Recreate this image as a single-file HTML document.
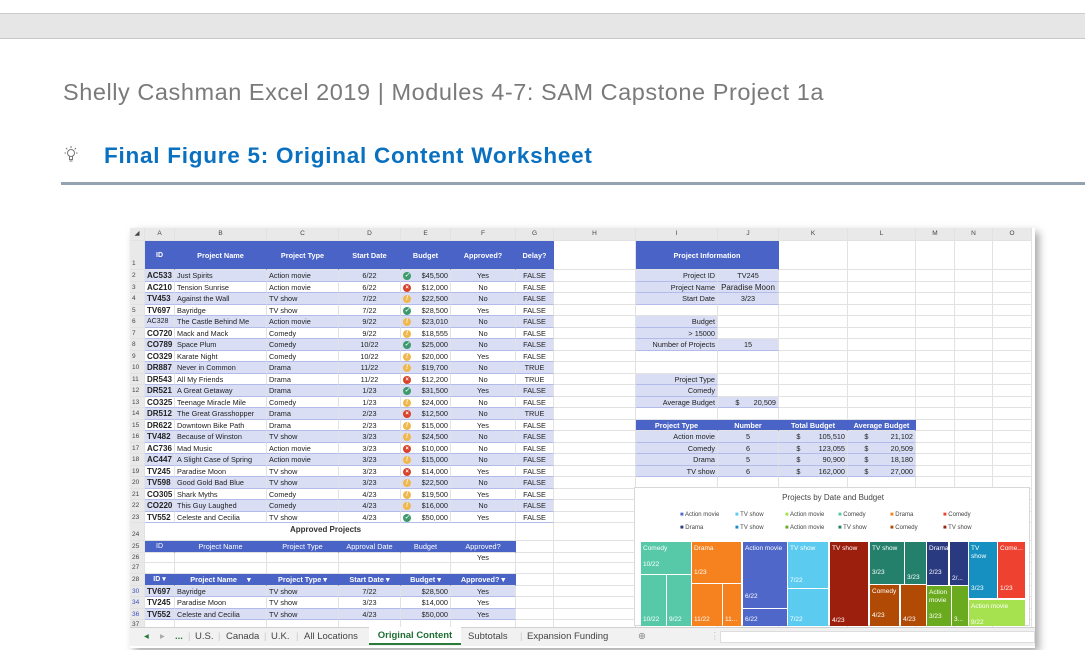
<!DOCTYPE html>
<html><head><meta charset="utf-8"><style>
*{margin:0;padding:0;box-sizing:border-box}
body{width:1085px;height:650px;background:#fff;position:relative;overflow:hidden;font-family:"Liberation Sans",sans-serif}
.top{position:absolute;left:0;top:13px;width:1085px;height:26px;background:#e6e6e6;border-top:1px solid #ccc;border-bottom:1px solid #c8c8c8}
.t1{position:absolute;left:63px;top:79px;font-size:23.5px;color:#7a7a7a;letter-spacing:0.55px}
.t2{position:absolute;left:104px;top:143px;font-size:22.5px;color:#0a70c0;font-weight:bold;letter-spacing:0.75px}
.rule{position:absolute;left:61px;top:182px;width:1024px;height:3px;background:#93a3b2}
.sheet{position:absolute;left:130px;top:228px;width:905px;height:420px;background:#fff;box-shadow:4px 4px 8px rgba(0,0,0,.35);font-size:7.3px;color:#222;overflow:hidden}
.r{display:flex;height:11.5px;line-height:11.5px}
.r>span{display:block;overflow:hidden;white-space:nowrap;border-right:1px solid #e2e2e2;border-bottom:1px solid #e2e2e2;padding:0 2px}
.n{width:15px;background:#e9e9e9;color:#444;text-align:left;font-size:6.5px}
.a{width:30px}.bb{width:92px}.c{width:72px}.d{width:62px;text-align:center}.e{width:50px;text-align:right}.f{width:65px;text-align:center}.g{width:38px;text-align:center}
.h{width:82px}.i{width:82px;text-align:right}.j{width:61px;text-align:center}.k{width:69px;text-align:right}.l{width:68px;text-align:right}.m{width:39px}.nn{width:38px}.o{width:39px}
.hd>span{background:#e9e9e9;text-align:center;color:#444;font-size:6.5px}
.b{background:#d9def4!important;border-bottom:1px solid #b3bce8!important}
.w{border-bottom:1px solid #b3bce8!important}
.bl{background:#4a63c7!important;color:#fff;font-weight:bold;border-right-color:#4a63c7!important}
.a{font-weight:bold;font-size:8px}
.ic{display:inline-block;width:8px;height:8px;border-radius:50%;vertical-align:-1px;float:left;margin-top:2px;color:#fff;font-size:6px;line-height:8px;text-align:center;font-weight:bold}
.G{background:#3c9a6c}.R{background:#d8432a}.Y{background:#f0b84c}
.tabs{position:absolute;left:0;top:399px;width:905px;height:19px;background:#f1f1f1;border-top:1px solid #d0d0d0;font-size:9.5px;color:#444;line-height:18px}
.tabs span{position:absolute;top:0}
.chart{position:absolute;left:504px;top:259px;width:396px;height:139px;background:#fff;border:1px solid #d8d8d8}
.chart div{position:absolute;color:#fff;font-size:6.5px;padding:3px 2px;overflow:hidden;line-height:8px}
.chart .lg{position:absolute;color:#444;font-size:6px;padding:0}
</style></head><body>
<div class="top"></div>
<div class="t1">Shelly Cashman Excel 2019 | Modules 4-7: SAM Capstone Project 1a</div>
<svg style="position:absolute;left:64px;top:145px" width="14" height="18" viewBox="0 0 14 18"><g stroke="#777" fill="none" stroke-width="1"><circle cx="7" cy="8" r="3.5"/><path d="M5.5 11.5v3h3v-3M5.5 16h3M7 1v2M2 3l1.3 1.3M12 3l-1.3 1.3M0.5 8h1.5M12 8h1.5"/></g></svg>
<div class="t2">Final Figure 5: Original Content Worksheet</div>
<div class="rule"></div>
<div class="sheet">
<div class="r hd" style="height:12.5px;line-height:12px"><span class="n">◢</span><span class="a" style="font-weight:normal;font-size:6.5px">A</span><span class="bb">B</span><span class="c">C</span><span class="d">D</span><span class="e" style="text-align:center">E</span><span class="f">F</span><span class="g">G</span><span class="h">H</span><span class="i" style="text-align:center">I</span><span class="j">J</span><span class="k" style="text-align:center">K</span><span class="l" style="text-align:center">L</span><span class="m">M</span><span class="nn">N</span><span class="o">O</span></div>
<div class="r" style="height:29.5px;line-height:29px"><span class="n" style="line-height:45px">1</span><span class="a bl" style="text-align:center;font-size:7px">ID</span><span class="bb bl" style="text-align:center">Project Name</span><span class="c bl" style="text-align:center">Project Type</span><span class="d bl">Start Date</span><span class="e bl" style="text-align:center">Budget</span><span class="f bl">Approved?</span><span class="g bl">Delay?</span><span class="h"></span><span class="i bl" style="text-align:center;width:143px">Project Information</span><span class="k"></span><span class="l"></span><span class="m"></span><span class="nn"></span><span class="o"></span></div>
<div class="r"><span class="n">2</span><span class="a b">AC533</span><span class="bb b">Just Spirits</span><span class="c b">Action movie</span><span class="d b">6/22</span><span class="e b"><i class="ic G">✓</i>$45,500</span><span class="f b">Yes</span><span class="g b">FALSE</span><span class="h"></span><span class="i b">Project ID</span><span class="j b">TV245</span><span class="k"></span><span class="l"></span><span class="m"></span><span class="nn"></span><span class="o"></span></div>
<div class="r"><span class="n">3</span><span class="a w">AC210</span><span class="bb w">Tension Sunrise</span><span class="c w">Action movie</span><span class="d w">6/22</span><span class="e w"><i class="ic R">×</i>$12,000</span><span class="f w">No</span><span class="g w">FALSE</span><span class="h"></span><span class="i b">Project Name</span><span class="j b" style="font-size:8px;overflow:visible">Paradise Moon</span><span class="k"></span><span class="l"></span><span class="m"></span><span class="nn"></span><span class="o"></span></div>
<div class="r"><span class="n">4</span><span class="a b">TV453</span><span class="bb b">Against the Wall</span><span class="c b">TV show</span><span class="d b">7/22</span><span class="e b"><i class="ic Y">!</i>$22,500</span><span class="f b">No</span><span class="g b">FALSE</span><span class="h"></span><span class="i b">Start Date</span><span class="j b">3/23</span><span class="k"></span><span class="l"></span><span class="m"></span><span class="nn"></span><span class="o"></span></div>
<div class="r"><span class="n">5</span><span class="a w">TV697</span><span class="bb w">Bayridge</span><span class="c w">TV show</span><span class="d w">7/22</span><span class="e w"><i class="ic G">✓</i>$28,500</span><span class="f w">Yes</span><span class="g w">FALSE</span><span class="h"></span><span class="i"></span><span class="j"></span><span class="k"></span><span class="l"></span><span class="m"></span><span class="nn"></span><span class="o"></span></div>
<div class="r"><span class="n">6</span><span class="a b" style="font-weight:normal;font-size:7px">AC328</span><span class="bb b">The Castle Behind Me</span><span class="c b">Action movie</span><span class="d b">9/22</span><span class="e b"><i class="ic Y">!</i>$23,010</span><span class="f b">No</span><span class="g b">FALSE</span><span class="h"></span><span class="i b">Budget</span><span class="j"></span><span class="k"></span><span class="l"></span><span class="m"></span><span class="nn"></span><span class="o"></span></div>
<div class="r"><span class="n">7</span><span class="a w">CO720</span><span class="bb w">Mack and Mack</span><span class="c w">Comedy</span><span class="d w">9/22</span><span class="e w"><i class="ic Y">!</i>$18,555</span><span class="f w">No</span><span class="g w">FALSE</span><span class="h"></span><span class="i b">&gt; 15000</span><span class="j"></span><span class="k"></span><span class="l"></span><span class="m"></span><span class="nn"></span><span class="o"></span></div>
<div class="r"><span class="n">8</span><span class="a b">CO789</span><span class="bb b">Space Plum</span><span class="c b">Comedy</span><span class="d b">10/22</span><span class="e b"><i class="ic G">✓</i>$25,000</span><span class="f b">No</span><span class="g b">FALSE</span><span class="h"></span><span class="i b">Number of Projects</span><span class="j b">15</span><span class="k"></span><span class="l"></span><span class="m"></span><span class="nn"></span><span class="o"></span></div>
<div class="r"><span class="n">9</span><span class="a w">CO329</span><span class="bb w">Karate Night</span><span class="c w">Comedy</span><span class="d w">10/22</span><span class="e w"><i class="ic Y">!</i>$20,000</span><span class="f w">Yes</span><span class="g w">FALSE</span><span class="h"></span><span class="i"></span><span class="j"></span><span class="k"></span><span class="l"></span><span class="m"></span><span class="nn"></span><span class="o"></span></div>
<div class="r"><span class="n">10</span><span class="a b">DR887</span><span class="bb b">Never in Common</span><span class="c b">Drama</span><span class="d b">11/22</span><span class="e b"><i class="ic Y">!</i>$19,700</span><span class="f b">No</span><span class="g b">TRUE</span><span class="h"></span><span class="i"></span><span class="j"></span><span class="k"></span><span class="l"></span><span class="m"></span><span class="nn"></span><span class="o"></span></div>
<div class="r"><span class="n">11</span><span class="a w">DR543</span><span class="bb w">All My Friends</span><span class="c w">Drama</span><span class="d w">11/22</span><span class="e w"><i class="ic R">×</i>$12,200</span><span class="f w">No</span><span class="g w">TRUE</span><span class="h"></span><span class="i b">Project Type</span><span class="j"></span><span class="k"></span><span class="l"></span><span class="m"></span><span class="nn"></span><span class="o"></span></div>
<div class="r"><span class="n">12</span><span class="a b">DR521</span><span class="bb b">A Great Getaway</span><span class="c b">Drama</span><span class="d b">1/23</span><span class="e b"><i class="ic G">✓</i>$31,500</span><span class="f b">Yes</span><span class="g b">FALSE</span><span class="h"></span><span class="i b">Comedy</span><span class="j"></span><span class="k"></span><span class="l"></span><span class="m"></span><span class="nn"></span><span class="o"></span></div>
<div class="r"><span class="n">13</span><span class="a w">CO325</span><span class="bb w">Teenage Miracle Mile</span><span class="c w">Comedy</span><span class="d w">1/23</span><span class="e w"><i class="ic Y">!</i>$24,000</span><span class="f w">No</span><span class="g w">FALSE</span><span class="h"></span><span class="i b">Average Budget</span><span class="j b" style="text-align:right">$ &nbsp; &nbsp; &nbsp; 20,509</span><span class="k"></span><span class="l"></span><span class="m"></span><span class="nn"></span><span class="o"></span></div>
<div class="r"><span class="n">14</span><span class="a b">DR512</span><span class="bb b">The Great Grasshopper</span><span class="c b">Drama</span><span class="d b">2/23</span><span class="e b"><i class="ic R">×</i>$12,500</span><span class="f b">No</span><span class="g b">TRUE</span><span class="h"></span><span class="i"></span><span class="j"></span><span class="k"></span><span class="l"></span><span class="m"></span><span class="nn"></span><span class="o"></span></div>
<div class="r"><span class="n">15</span><span class="a w">DR622</span><span class="bb w">Downtown Bike Path</span><span class="c w">Drama</span><span class="d w">2/23</span><span class="e w"><i class="ic Y">!</i>$15,000</span><span class="f w">Yes</span><span class="g w">FALSE</span><span class="h"></span><span class="i bl" style="text-align:center">Project Type</span><span class="j bl">Number</span><span class="k bl" style="text-align:center">Total Budget</span><span class="l bl" style="text-align:center">Average Budget</span><span class="m"></span><span class="nn"></span><span class="o"></span></div>
<div class="r"><span class="n">16</span><span class="a b">TV482</span><span class="bb b">Because of Winston</span><span class="c b">TV show</span><span class="d b">3/23</span><span class="e b"><i class="ic Y">!</i>$24,500</span><span class="f b">No</span><span class="g b">FALSE</span><span class="h"></span><span class="i b">Action movie</span><span class="j b">5</span><span class="k b">$ &nbsp; &nbsp; &nbsp; &nbsp; 105,510</span><span class="l b">$ &nbsp; &nbsp; &nbsp; &nbsp; &nbsp; 21,102</span><span class="m"></span><span class="nn"></span><span class="o"></span></div>
<div class="r"><span class="n">17</span><span class="a w">AC736</span><span class="bb w">Mad Music</span><span class="c w">Action movie</span><span class="d w">3/23</span><span class="e w"><i class="ic R">×</i>$10,000</span><span class="f w">No</span><span class="g w">FALSE</span><span class="h"></span><span class="i b">Comedy</span><span class="j b">6</span><span class="k b">$ &nbsp; &nbsp; &nbsp; &nbsp; 123,055</span><span class="l b">$ &nbsp; &nbsp; &nbsp; &nbsp; &nbsp; 20,509</span><span class="m"></span><span class="nn"></span><span class="o"></span></div>
<div class="r"><span class="n">18</span><span class="a b">AC447</span><span class="bb b">A Slight Case of Spring</span><span class="c b">Action movie</span><span class="d b">3/23</span><span class="e b"><i class="ic Y">!</i>$15,000</span><span class="f b">No</span><span class="g b">FALSE</span><span class="h"></span><span class="i b">Drama</span><span class="j b">5</span><span class="k b">$ &nbsp; &nbsp; &nbsp; &nbsp; &nbsp; 90,900</span><span class="l b">$ &nbsp; &nbsp; &nbsp; &nbsp; &nbsp; 18,180</span><span class="m"></span><span class="nn"></span><span class="o"></span></div>
<div class="r"><span class="n">19</span><span class="a w">TV245</span><span class="bb w">Paradise Moon</span><span class="c w">TV show</span><span class="d w">3/23</span><span class="e w"><i class="ic R">×</i>$14,000</span><span class="f w">Yes</span><span class="g w">FALSE</span><span class="h"></span><span class="i b">TV show</span><span class="j b">6</span><span class="k b">$ &nbsp; &nbsp; &nbsp; &nbsp; 162,000</span><span class="l b">$ &nbsp; &nbsp; &nbsp; &nbsp; &nbsp; 27,000</span><span class="m"></span><span class="nn"></span><span class="o"></span></div>
<div class="r"><span class="n">20</span><span class="a b">TV598</span><span class="bb b">Good Gold Bad Blue</span><span class="c b">TV show</span><span class="d b">3/23</span><span class="e b"><i class="ic Y">!</i>$22,500</span><span class="f b">No</span><span class="g b">FALSE</span><span class="h"></span><span class="i"></span><span class="j"></span><span class="k"></span><span class="l"></span><span class="m"></span><span class="nn"></span><span class="o"></span></div>
<div class="r"><span class="n">21</span><span class="a w">CO305</span><span class="bb w">Shark Myths</span><span class="c w">Comedy</span><span class="d w">4/23</span><span class="e w"><i class="ic Y">!</i>$19,500</span><span class="f w">Yes</span><span class="g w">FALSE</span><span class="h"></span><span class="i"></span><span class="j"></span><span class="k"></span><span class="l"></span><span class="m"></span><span class="nn"></span><span class="o"></span></div>
<div class="r"><span class="n">22</span><span class="a b">CO220</span><span class="bb b">This Guy Laughed</span><span class="c b">Comedy</span><span class="d b">4/23</span><span class="e b"><i class="ic Y">!</i>$16,000</span><span class="f b">No</span><span class="g b">FALSE</span><span class="h"></span><span class="i"></span><span class="j"></span><span class="k"></span><span class="l"></span><span class="m"></span><span class="nn"></span><span class="o"></span></div>
<div class="r"><span class="n">23</span><span class="a w">TV552</span><span class="bb w">Celeste and Cecilia</span><span class="c w">TV show</span><span class="d w">4/23</span><span class="e w"><i class="ic G">✓</i>$50,000</span><span class="f w">Yes</span><span class="g w">FALSE</span><span class="h"></span><span class="i"></span><span class="j"></span><span class="k"></span><span class="l"></span><span class="m"></span><span class="nn"></span><span class="o"></span></div>
<div class="r" style="height:18px;line-height:24px;position:relative"><span class="n">24</span><span class="a" style="border-right:0"></span><span class="bb" style="border-right:0"></span><span class="c" style="border-right:0"></span><span class="d" style="border-right:0"></span><span class="e" style="border-right:0"></span><span class="f"></span><span class="g"></span><span class="h"></span><span class="i"></span><span class="j"></span><span class="k"></span><span class="l"></span><span class="m"></span><span class="nn"></span><span class="o"></span><b style="position:absolute;left:160px;top:0;line-height:13px;font-size:8px;color:#333">Approved Projects</b></div>
<div class="r"><span class="n">25</span><span class="a bl" style="font-weight:normal;font-size:7px;text-align:center">ID</span><span class="bb bl" style="font-weight:normal;text-align:center">Project Name</span><span class="c bl" style="font-weight:normal;text-align:center">Project Type</span><span class="d bl" style="font-weight:normal">Approval Date</span><span class="e bl" style="font-weight:normal;text-align:center">Budget</span><span class="f bl" style="font-weight:normal">Approved?</span><span class="g"></span><span class="h"></span><span class="i"></span><span class="j"></span><span class="k"></span><span class="l"></span><span class="m"></span><span class="nn"></span><span class="o"></span></div>
<div class="r" style="height:10.5px;line-height:10px"><span class="n">26</span><span class="a"></span><span class="bb"></span><span class="c"></span><span class="d"></span><span class="e"></span><span class="f">Yes</span><span class="g"></span><span class="h"></span><span class="i"></span><span class="j"></span><span class="k"></span><span class="l"></span><span class="m"></span><span class="nn"></span><span class="o"></span></div>
<div class="r" style="height:10.5px;line-height:10px"><span class="n">27</span><span class="a"></span><span class="bb"></span><span class="c"></span><span class="d"></span><span class="e"></span><span class="f"></span><span class="g"></span><span class="h"></span><span class="i"></span><span class="j"></span><span class="k"></span><span class="l"></span><span class="m"></span><span class="nn"></span><span class="o"></span></div>
<div class="r" style="height:12px"><span class="n">28</span><span class="a bl" style="text-align:center;font-size:7px">ID ▾</span><span class="bb bl" style="text-align:center">Project Name &nbsp; &nbsp; ▾</span><span class="c bl" style="text-align:center">Project Type ▾</span><span class="d bl">Start Date ▾</span><span class="e bl" style="text-align:center">Budget ▾</span><span class="f bl">Approved? ▾</span><span class="g"></span><span class="h"></span><span class="i"></span><span class="j"></span><span class="k"></span><span class="l"></span><span class="m"></span><span class="nn"></span><span class="o"></span></div>
<div class="r"><span class="n" style="color:#3a4fc0">30</span><span class="a b">TV697</span><span class="bb b">Bayridge</span><span class="c b">TV show</span><span class="d b">7/22</span><span class="e b">$28,500</span><span class="f b">Yes</span><span class="g"></span><span class="h"></span><span class="i"></span><span class="j"></span><span class="k"></span><span class="l"></span><span class="m"></span><span class="nn"></span><span class="o"></span></div>
<div class="r"><span class="n" style="color:#3a4fc0">34</span><span class="a w">TV245</span><span class="bb w">Paradise Moon</span><span class="c w">TV show</span><span class="d w">3/23</span><span class="e w">$14,000</span><span class="f w">Yes</span><span class="g"></span><span class="h"></span><span class="i"></span><span class="j"></span><span class="k"></span><span class="l"></span><span class="m"></span><span class="nn"></span><span class="o"></span></div>
<div class="r"><span class="n" style="color:#3a4fc0">36</span><span class="a b">TV552</span><span class="bb b">Celeste and Cecilia</span><span class="c b">TV show</span><span class="d b">4/23</span><span class="e b">$50,000</span><span class="f b">Yes</span><span class="g"></span><span class="h"></span><span class="i"></span><span class="j"></span><span class="k"></span><span class="l"></span><span class="m"></span><span class="nn"></span><span class="o"></span></div>
<div class="r" style="height:8px;line-height:10px"><span class="n">37</span><span class="a"></span><span class="bb"></span><span class="c"></span><span class="d"></span><span class="e"></span><span class="f"></span><span class="g"></span><span class="h"></span><span class="i"></span><span class="j"></span><span class="k"></span><span class="l"></span><span class="m"></span><span class="nn"></span><span class="o"></span></div>

<div class="chart">
<span class="lg" style="left:0;width:396px;text-align:center;top:5px;font-size:8px;color:#444">Projects by Date and Budget</span>
<span class="lg" style="left:45px;top:24px"><b style="color:#4e67c8">■</b> Action movie</span>
<span class="lg" style="left:100px;top:24px"><b style="color:#5bcbf0">■</b> TV show</span>
<span class="lg" style="left:150px;top:24px"><b style="color:#a6e24f">■</b> Action movie</span>
<span class="lg" style="left:203px;top:24px"><b style="color:#57c9a9">■</b> Comedy</span>
<span class="lg" style="left:255px;top:24px"><b style="color:#f5821f">■</b> Drama</span>
<span class="lg" style="left:308px;top:24px"><b style="color:#ef4130">■</b> Comedy</span>
<span class="lg" style="left:45px;top:37px"><b style="color:#2a3a80">■</b> Drama</span>
<span class="lg" style="left:100px;top:37px"><b style="color:#1590c0">■</b> TV show</span>
<span class="lg" style="left:150px;top:37px"><b style="color:#6aaa1e">■</b> Action movie</span>
<span class="lg" style="left:203px;top:37px"><b style="color:#24806b">■</b> TV show</span>
<span class="lg" style="left:255px;top:37px"><b style="color:#b04a05">■</b> Comedy</span>
<span class="lg" style="left:308px;top:37px"><b style="color:#9c1f0d">■</b> TV show</span>
<div style="left:6px;top:54px;width:50px;height:32px;background:#57c9a9">Comedy<br><br>10/22</div>
<div style="left:6px;top:87px;width:25px;height:51px;background:#57c9a9;padding-top:41px">10/22</div>
<div style="left:32px;top:87px;width:24px;height:51px;background:#57c9a9;padding-top:41px">9/22</div>
<div style="left:57px;top:54px;width:49px;height:41px;background:#f5821f">Drama<br><br><br>1/23</div>
<div style="left:57px;top:96px;width:30px;height:42px;background:#f5821f;padding-top:32px">11/22</div>
<div style="left:88px;top:96px;width:18px;height:42px;background:#f5821f;padding-top:32px">11...</div>
<div style="left:108px;top:54px;width:44px;height:66px;background:#4e67c8;padding-top:3px">Action movie<br><br><br><br><br><br>6/22</div>
<div style="left:108px;top:121px;width:44px;height:17px;background:#4e67c8;padding-top:7px">6/22</div>
<div style="left:153px;top:54px;width:40px;height:46px;background:#5bcbf0">TV show<br><br><br><br>7/22</div>
<div style="left:153px;top:101px;width:40px;height:37px;background:#5bcbf0;padding-top:27px">7/22</div>
<div style="left:195px;top:54px;width:38px;height:84px;background:#9c1f0d">TV show<br><br><br><br><br><br><br><br><br>4/23</div>
<div style="left:235px;top:54px;width:34px;height:42px;background:#24806b">TV show<br><br><br>3/23</div>
<div style="left:270px;top:54px;width:21px;height:42px;background:#24806b;padding-top:32px">3/23</div>
<div style="left:235px;top:97px;width:29px;height:41px;background:#b04a05">Comedy<br><br><br>4/23</div>
<div style="left:266px;top:97px;width:25px;height:41px;background:#b04a05;padding-top:31px">4/23</div>
<div style="left:292px;top:54px;width:21px;height:43px;background:#2a3a80">Drama<br><br><br>2/23</div>
<div style="left:315px;top:54px;width:18px;height:43px;background:#2a3a80;padding-top:33px">2/...</div>
<div style="left:292px;top:98px;width:24px;height:40px;background:#6aaa1e">Action movie<br><br>3/23</div>
<div style="left:317px;top:98px;width:16px;height:40px;background:#6aaa1e;padding-top:30px">3...</div>
<div style="left:334px;top:54px;width:28px;height:56px;background:#1590c0">TV show<br><br><br><br>3/23</div>
<div style="left:363px;top:54px;width:27px;height:56px;background:#ef4130">Come...<br><br><br><br><br>1/23</div>
<div style="left:334px;top:112px;width:56px;height:26px;background:#a6e24f">Action movie<br><br>9/22</div>
</div>

<div class="tabs">
<span style="left:14px;color:#2a7a3a">◂</span><span style="left:30px;color:#aaa">▸</span><span style="left:45px;color:#2a7a3a;font-weight:bold">...</span>
<span style="left:58px;color:#ccc">|</span><span style="left:65px">U.S.</span><span style="left:88px;color:#ccc">|</span><span style="left:96px">Canada</span><span style="left:134px;color:#ccc">|</span><span style="left:141px">U.K.</span><span style="left:166px;color:#ccc">|</span><span style="left:174px">All Locations</span>
<span style="left:239px;top:-1px;width:92px;height:18px;background:#fff;border-bottom:2px solid #2a7a3a;color:#1f6e33;font-weight:bold;text-align:center">Original Content</span>
<span style="left:338px">Subtotals</span><span style="left:390px;color:#ccc">|</span><span style="left:397px">Expansion Funding</span>
<span style="left:508px;color:#888">⊕</span><span style="left:580px;color:#bbb">⋮</span><span style="left:590px;top:3px;width:315px;height:12px;background:#fff;border:1px solid #ddd"></span>
</div>
</div>
</body></html>
